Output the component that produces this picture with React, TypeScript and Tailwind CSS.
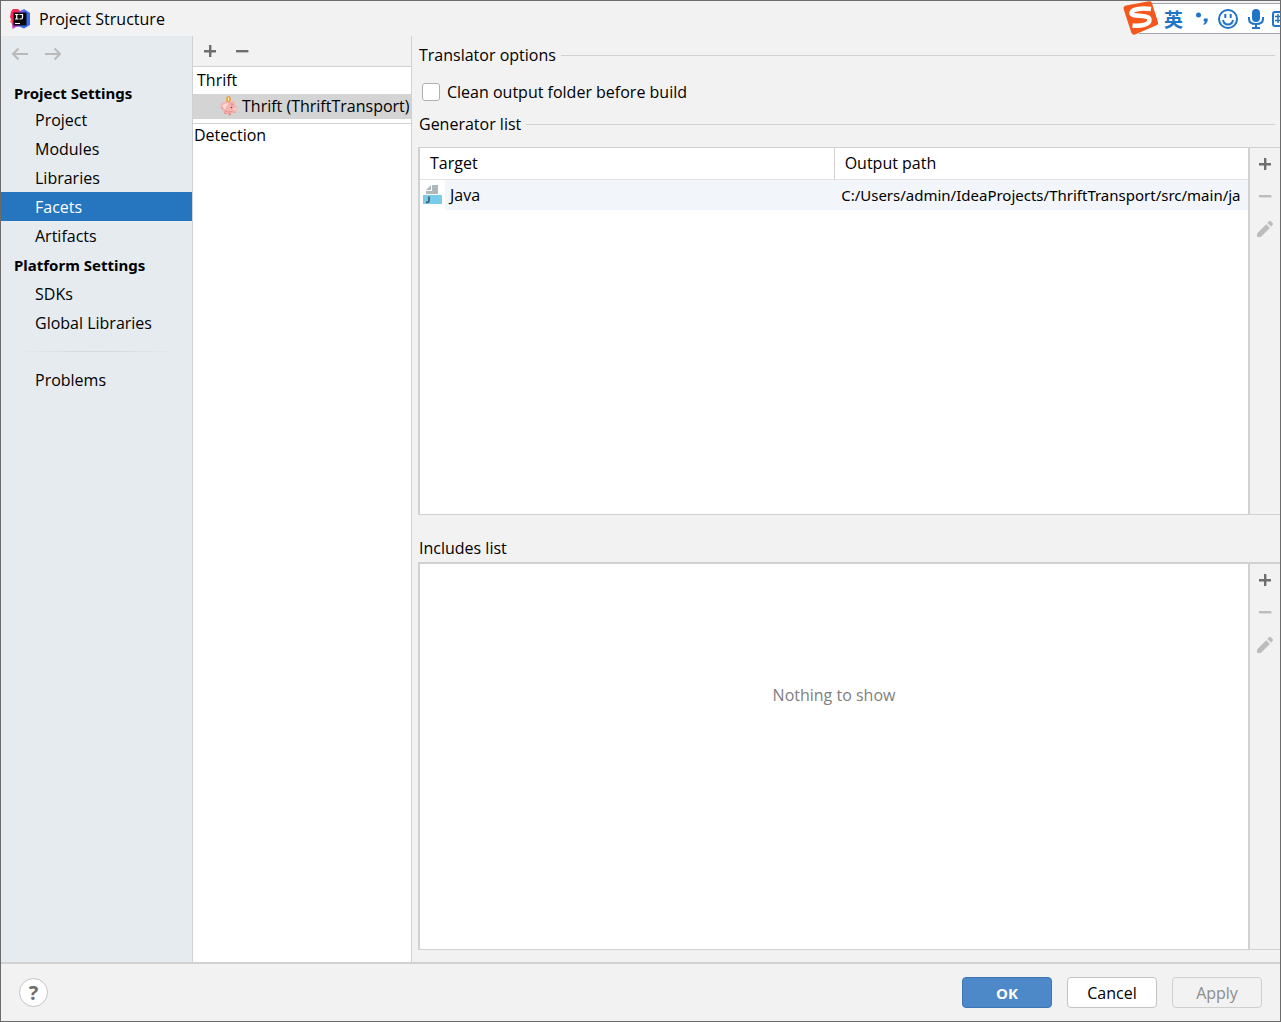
import type { ReactNode } from "react";
import clsx from "clsx";

const projectItems = ["Project", "Modules", "Libraries", "Facets", "Artifacts"];
const platformItems = ["SDKs", "Global Libraries"];

const generators = [
  {
    target: "Java",
    path: "C:/Users/admin/IdeaProjects/ThriftTransport/src/main/ja",
  },
];

function PlusIcon() {
  return (
    <svg viewBox="0 0 16 16" className="size-4" fill="currentColor">
      <path d="M7 2h2.4v5H14v2.4H9.400V14H7V9.400H2V7h5z" />
    </svg>
  );
}

function MinusIcon() {
  return (
    <svg viewBox="0 0 16 16" className="size-4" fill="currentColor">
      <path d="M2 7h12.400v2.400H2z" />
    </svg>
  );
}

function PencilIcon() {
  return (
    <svg viewBox="0 0 18 18" className="size-[18px]" fill="currentColor">
      <path d="M1 13.400 10.200 4.200l3.700 3.700L4.700 17H1z" />
      <path d="m11.300 3.100 1.900-1.900q.8-.7 1.600 0l2 2q.7.8 0 1.600L15 6.800z" />
    </svg>
  );
}

function ArrowIcon({ flip = false }: { flip?: boolean }) {
  return (
    <svg
      viewBox="0 0 18 14"
      className={clsx("w-[18px] h-[14px]", flip && "-scale-x-100")}
      fill="none"
      stroke="currentColor"
      strokeWidth="2"
    >
      <path d="M17 7H2M7.500 1.500 2 7l5.500 5.500" />
    </svg>
  );
}

function IdeaLogo() {
  return (
    <svg viewBox="0 0 20 20" className="size-5">
      <path d="M0 12.500 3 8l5 8-5 .5z" fill="#fc801d" />
      <path d="M1 2.500 3 0h5l4 4-4 12-5 1-1.500-6L0 8z" fill="#fe2857" />
      <path d="m2 14 9-3 1 6-6 1-3.500 2z" fill="#c138c4" />
      <path d="m10 3 4-3 6 4v12l-6 3.500-6-2.500z" fill="#3b6bf0" />
      <path d="m8 3 4-2 3 3-1 4H8z" fill="#8a55e0" />
      <path d="M3.500 3.500h13v13h-13z" fill="#0a0a0c" />
      <path
        d="M5 5.500h3.500M6.700 5.500v4.500M5 10h3.500M9.500 5.500h3v3q0 1.500-1.500 1.500H9.500M5 14.500h5"
        fill="none"
        stroke="#fff"
        strokeWidth="1.200"
      />
    </svg>
  );
}

function PiggyIcon() {
  return (
    <svg viewBox="0 0 18 20" className="w-[18px] h-5 shrink-0">
      <path d="M3.500 14h3.500v4H4.500zM8 16h3.500l-.8 3.500H8.500zM13 14h3l-.7 3h-2z" fill="#e58f8c" />
      <path
        d="M.5 7.500 3 6.500Q6.500 4.500 10 6l5-1-.5 3.500q1.500 1 3 4l-1.500 3q-3 2-7.500 2-4.500-.3-6-3.500Q.5 11 .5 7.500z"
        fill="#f4b3ae"
      />
      <path d="M2.500 9.500Q5 6.500 9 7.500 6 9.500 5.500 13.500q-2.500-1-3-4z" fill="#fbd9d5" />
      <path d="m10.500 6.500 1 3.500 3-1.500z" fill="#e89591" />
      <path d="M4.500 15q4 2 8 .5M1 11l1.500 2" fill="none" stroke="#dc8683" strokeWidth=".8" />
      <ellipse cx="15" cy="13" rx="2" ry="1.600" fill="#f9c9c4" />
      <circle cx="11.500" cy="11.500" r=".8" fill="#6f3a3a" />
      <ellipse cx="8.500" cy="3.300" rx="2.400" ry="3.200" fill="#e7a34b" />
      <path d="M8.500 1.500v3.500" stroke="#fff0b0" />
    </svg>
  );
}

function JavaFileIcon() {
  return (
    <svg viewBox="0 0 19 19" className="size-[19px]">
      <path d="M9 0h6v9H3V6h6z" fill="#adb7be" />
      <path d="M8 0v5H3z" fill="#adb7be" />
      <path d="M0 10h19v9H0z" fill="#78cbe9" />
      <path d="M6 11.500v4q0 1.800-1.500 1.800H3" fill="none" stroke="#3f5661" strokeWidth="1.600" />
    </svg>
  );
}

function InputMethodBar() {
  return (
    <div className="absolute right-0 top-0 flex h-9 w-[157px] overflow-hidden text-[#1f74c8]">
      <div className="mt-[2px] ml-4 flex h-[31px] w-full items-center border-y border-[#a3a3ab] bg-white pl-[25px]">
        <span className="w-5 shrink-0 font-['Noto_Sans_CJK_SC',sans-serif] text-[19px] leading-none font-bold">
          英
        </span>
        <svg viewBox="0 0 12 14" className="ml-3 h-[14px] w-3 shrink-0" fill="currentColor">
          <circle cx="2.500" cy="3" r="2.500" />
          <path d="M8 6.500h3.700q.5 4.500-3.700 6.500l-.7-1q1.500-1 1.500-2.500L7.500 9z" />
        </svg>
        <svg viewBox="0 0 20 20" className="ml-[10px] size-5 shrink-0" fill="none" stroke="currentColor" strokeWidth="2">
          <circle cx="10" cy="10" r="9" />
          <path d="M5 11q1 4.500 5 4.500t5-4.500M7.300 5v4M12.700 5v4" />
        </svg>
        <svg viewBox="0 0 16 20" className="ml-[10px] h-5 w-4 shrink-0" fill="currentColor">
          <rect x="4" width="8" height="13" rx="4" />
          <path d="M1 8v2q0 5 7 5t7-5V8M8 15v4M4 19h8" fill="none" stroke="currentColor" strokeWidth="2" />
        </svg>
        <svg viewBox="0 0 20 16" className="ml-2 h-4 w-5 shrink-0" fill="none" stroke="currentColor" strokeWidth="2">
          <rect x="1" y="1" width="18" height="14" rx="2" />
          <path d="M3 5.500h14M3 9.500h14M6 3v9M11 3v9" strokeWidth="1.500" />
        </svg>
      </div>
      <svg viewBox="0 0 36 36" className="absolute left-0 top-0 size-9">
        <path d="M3 4.500 26 .3q2.500-.3 3 2l6 19q.5 2.500-2 3.200L12 33.500q-3 .7-3.700-2L.6 8q-.6-2.700 2.400-3.500z" fill="#f4581c" />
        <path
          d="M28 8C17 6.500 8 8.500 8.500 12.500 9 16.500 26 13 26.500 18.500 27 24 17 25.500 9.500 24.500"
          fill="none"
          stroke="#fff"
          strokeWidth="4.500"
        />
      </svg>
    </div>
  );
}

function NavItem({ label, active = false }: { label: string; active?: boolean }) {
  return (
    <li>
      <a
        href={`#${label.toLowerCase().replace(" ", "-")}`}
        aria-current={active ? "page" : undefined}
        className={clsx("flex h-[29px] items-center pl-[34px]", active && "bg-[#2675bf] text-white")}
      >
        {label}
      </a>
    </li>
  );
}

function GroupTitle({ children }: { children: ReactNode }) {
  return (
    <h2 className="flex h-5 items-center gap-[5px] pl-px">
      <span className="shrink-0">{children}</span>
      <span className="mr-[5px] h-px flex-1 bg-[#d1d1d1]" />
    </h2>
  );
}

function ListToolbar() {
  return (
    <div className="flex w-8 shrink-0 flex-col items-center gap-4 border-l-2 border-[#d1d1d1] pt-2 text-[#bdbdbd]">
      <button type="button" aria-label="Add" className="text-[#6e6e6e]">
        <PlusIcon />
      </button>
      <button type="button" aria-label="Remove" disabled>
        <MinusIcon />
      </button>
      <button type="button" aria-label="Edit" disabled>
        <PencilIcon />
      </button>
    </div>
  );
}

function Sidebar() {
  return (
    <nav className="w-48 shrink-0 border-r border-[#d1d1d1] bg-[#e6ebf0]">
      <div className="flex h-[45px] items-start gap-[15px] pt-[11px] pl-[10px] text-[#bababa]">
        <button type="button" aria-label="Back" disabled>
          <ArrowIcon />
        </button>
        <button type="button" aria-label="Forward" disabled>
          <ArrowIcon flip />
        </button>
      </div>
      <h2 className="flex h-6 items-center pl-[13px] font-['Noto_Sans',sans-serif] text-[15px] font-bold">
        Project Settings
      </h2>
      <ul>
        {projectItems.map((item) => (
          <NavItem key={item} label={item} active={item === "Facets"} />
        ))}
      </ul>
      <h2 className="flex h-[29px] items-center pl-[13px] font-['Noto_Sans',sans-serif] text-[15px] font-bold">
        Platform Settings
      </h2>
      <ul>
        {platformItems.map((item) => (
          <NavItem key={item} label={item} />
        ))}
        <li className="flex h-7 items-center px-3" aria-hidden="true">
          <span className="h-px flex-1 bg-linear-to-r from-transparent via-[#d3d7db] to-transparent" />
        </li>
        <NavItem label="Problems" />
      </ul>
    </nav>
  );
}

function FacetTree() {
  return (
    <section className="flex w-[219px] shrink-0 flex-col border-r border-[#d1d1d1] bg-white">
      <div className="flex h-[31px] items-center gap-4 border-b border-[#d1d1d1] bg-[#f2f2f2] pl-[9px] text-[#6e6e6e]">
        <button type="button" aria-label="Add facet">
          <PlusIcon />
        </button>
        <button type="button" aria-label="Remove facet">
          <MinusIcon />
        </button>
      </div>
      <ul>
        <li className="flex h-[27px] items-center pb-[2px] pl-1">Thrift</li>
        <li className="flex h-[25px] items-center gap-1 bg-[#d4d4d4] pb-[2px] pl-[27px] whitespace-nowrap">
          <PiggyIcon />
          Thrift (ThriftTransport)
        </li>
        <li className="mt-1 flex h-6 items-center border-t border-[#d1d1d1] pb-[2px] pl-px">Detection</li>
      </ul>
    </section>
  );
}

function FacetEditor() {
  return (
    <main className="flex min-w-0 flex-1 flex-col pt-[9px] pb-3 pl-[6px]">
      <GroupTitle>Translator options</GroupTitle>
      <label className="mt-4 flex h-[21px] items-center gap-[7px] pl-1">
        <input
          type="checkbox"
          className="size-[18px] appearance-none rounded-[3px] border border-[#b0b0b0] bg-white"
        />
        Clean output folder before build
      </label>
      <div className="mt-3">
        <GroupTitle>Generator list</GroupTitle>
      </div>

      <div className="mt-[13px] flex min-h-32 flex-[19] border border-r-0 border-l-2 border-[#d1d1d1]">
        <div className="min-w-0 flex-1 bg-white">
          <table className="w-full table-fixed text-left">
            <colgroup>
              <col className="w-[25px]" />
              <col className="w-[47%]" />
              <col />
            </colgroup>
            <thead>
              <tr className="h-[31px] border-b border-[#e3e3e3]">
                <th colSpan={2} className="border-r border-[#d1d1d1] pl-[10px] font-normal">
                  Target
                </th>
                <th className="pl-[10px] font-normal">Output path</th>
              </tr>
            </thead>
            <tbody>
              {generators.map((g) => (
                <tr key={g.target} className="h-[31px]">
                  <td className="pl-[3px]">
                    <JavaFileIcon />
                  </td>
                  <td className="bg-[#f2f5fa] pl-[5px]">{g.target}</td>
                  <td className="overflow-hidden bg-[#f2f5fa] pl-[7px] font-['Noto_Sans',sans-serif] text-[15px] leading-5 whitespace-nowrap">
                    {g.path}
                  </td>
                </tr>
              ))}
            </tbody>
          </table>
        </div>
        <ListToolbar />
      </div>

      <h2 className="mt-[22px] mb-[2px] flex h-[23px] items-center pl-px">Includes list</h2>
      <div className="flex min-h-32 flex-[20] border border-r-0 border-t-2 border-l-2 border-[#d1d1d1]">
        <div className="flex flex-1 justify-center bg-white pt-[121px] text-[#808080]">
          Nothing to show
        </div>
        <ListToolbar />
      </div>
    </main>
  );
}

export default function App() {
  return (
    <div className="relative flex min-h-screen flex-col border border-[#6b6b6b] bg-[#f2f2f2] font-['Open_Sans',sans-serif] text-base leading-5 text-black">
      <header className="flex h-[35px] items-center gap-[9px] pl-[9px]">
        <IdeaLogo />
        <h1>Project Structure</h1>
      </header>
      <InputMethodBar />

      <div className="flex flex-1">
        <Sidebar />
        <FacetTree />
        <FacetEditor />
      </div>

      <footer className="flex h-[59px] items-center gap-[15px] border-t-2 border-[#d1d1d1] pr-[18px] pl-[18px]">
        <button
          type="button"
          aria-label="Help"
          className="mr-auto flex size-[29px] items-center justify-center rounded-full border border-[#c4c4c4] bg-white text-xl font-bold text-[#6e6e6e]"
        >
          ?
        </button>
        <button type="button" className="h-[31px] w-[90px] rounded-[4px] border border-[#3d75b2] bg-[#4d89c9] text-[15px] font-bold text-white">
          OK
        </button>
        <button type="button" className="h-[31px] w-[90px] rounded-[4px] border border-[#c4c4c4] bg-white">
          Cancel
        </button>
        <button type="button" disabled className="h-[31px] w-[90px] rounded-[4px] border border-[#cfcfcf] text-[#8c8c8c]">
          Apply
        </button>
      </footer>
    </div>
  );
}
